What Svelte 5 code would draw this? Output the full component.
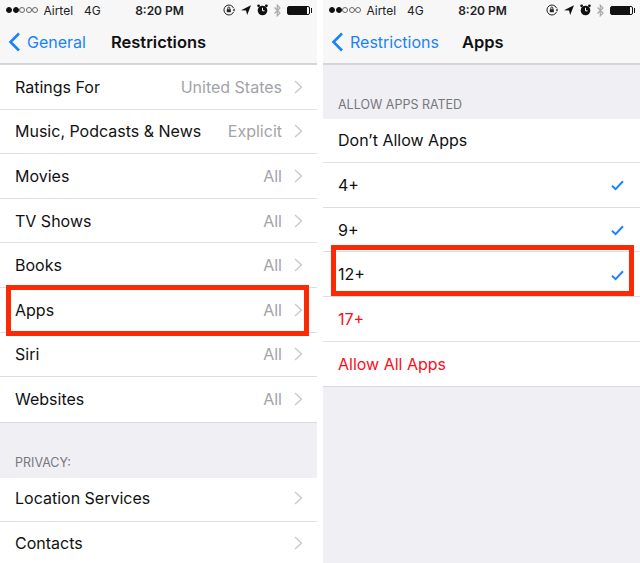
<script lang="ts">
  const restrictions = [
    { label: "Ratings For", value: "United States" },
    { label: "Music, Podcasts & News", value: "Explicit" },
    { label: "Movies", value: "All" },
    { label: "TV Shows", value: "All" },
    { label: "Books", value: "All" },
    { label: "Apps", value: "All" },
    { label: "Siri", value: "All" },
    { label: "Websites", value: "All" }
  ];
  const privacy = [{ label: "Location Services", value: "" }, { label: "Contacts", value: "" }];
  const ratings = [
    { label: "Don’t Allow Apps", check: false, red: false },
    { label: "4+", check: true, red: false },
    { label: "9+", check: true, red: false },
    { label: "12+", check: true, red: false },
    { label: "17+", check: false, red: true },
    { label: "Allow All Apps", check: false, red: true }
  ];
</script>

{#snippet status()}
  <div class="status">
    <div class="carrier">
      <span class="dots"><i class="on"></i><i class="on"></i><i></i><i></i><i></i></span>
      <span>Airtel</span>
      <span class="net">4G</span>
    </div>
    <div class="time">8:20 PM</div>
    <div class="icons">
      <svg width="12" height="12" viewBox="0 0 12 12"><path d="M10.6 4.2A5 5 0 1 0 10.6 7.8" fill="none" stroke="#222" stroke-width="1"/><path d="M9.6 6l2-1.4v2.8z" fill="#222"/><rect x="3.8" y="5.2" width="4" height="3" fill="#222"/><path d="M4.8 5.2V4a1 1 0 0 1 2 0v1.2" fill="none" stroke="#222" stroke-width=".9"/></svg>
      <svg width="10" height="10" viewBox="0 0 10 10"><path d="M0 5.2 10 .2 6.2 10 5 5.400z" fill="#111"/></svg>
      <svg width="11" height="12" viewBox="0 0 11 12"><circle cx="5.500" cy="6.500" r="4.800" fill="#111"/><circle cx="1.600" cy="1.800" r="1.400" fill="#111"/><circle cx="9.400" cy="1.800" r="1.400" fill="#111"/><path d="M5.500 3.800v3h2" fill="none" stroke="#fff" stroke-width="1"/></svg>
      <svg width="7" height="13" viewBox="0 0 7 13"><path d="M.5 3.500 6 9 3.300 11.800V1.200L6 4 .5 9.500" fill="none" stroke="#a9a9ac" stroke-width="1.200"/></svg>
      <span class="battery"><b></b></span>
    </div>
  </div>
{/snippet}

{#snippet nav(back, title, gap)}
  <header class="nav">
    {@render status()}
    <div class="bar">
      <svg class="back" width="13" height="20" viewBox="0 0 13 20"><path d="M11 1.500 2.500 10l8.500 8.500" fill="none" stroke="#1a82fb" stroke-width="2.600"/></svg>
      <span class="backlabel">{back}</span>
      <span class="title" style="margin-left: {gap}px">{title}</span>
    </div>
  </header>
{/snippet}

{#snippet row(item)}
  <div class="row">
    <div class="inner">
      <span class="label">{item.label}</span>
      {#if item.value}<span class="value">{item.value}</span>{/if}
      <svg class="chev" width="9" height="14" viewBox="0 0 9 14"><path d="M1 1l6.500 6L1 13" fill="none" stroke="#c7c7cc" stroke-width="1.300"/></svg>
    </div>
  </div>
{/snippet}

<main>
  <section class="panel">
    {@render nav("General", "Restrictions", 25)}
    <div class="group">
      {#each restrictions as item}
        {@render row(item)}
      {/each}
    </div>
    <div class="heading tall">PRIVACY:</div>
    <div class="group open">
      {#each privacy as item}
        {@render row(item)}
      {/each}
    </div>
    <div class="mark left"></div>
  </section>

  <section class="panel">
    {@render nav("Restrictions", "Apps", 23)}
    <div class="heading">ALLOW APPS RATED</div>
    <div class="group">
      {#each ratings as r}
        <div class="row">
          <div class="inner">
            <span class="label" class:red={r.red}>{r.label}</span>
            {#if r.check}
              <svg class="tick" width="13" height="11" viewBox="0 0 13 11"><path d="M1 5.800 4.600 9.200 12 1.200" fill="none" stroke="#1a82fb" stroke-width="2"/></svg>
            {/if}
          </div>
        </div>
      {/each}
    </div>
    <div class="mark right"></div>
  </section>
</main>

<style>
  :global(body) {
    background: #fff;
  }
  main {
    display: flex;
    justify-content: space-between;
    width: 640px;
    height: 563px;
    overflow: hidden;
    font-family: Inter, "Liberation Sans", sans-serif;
  }
  .panel {
    position: relative;
    width: 317px;
    height: 563px;
    overflow: hidden;
    background: #efeff4;
  }
  .nav {
    height: 63px;
    background: #f7f7f8;
    border-bottom: 2px solid #d6d6d9;
  }
  .status {
    display: flex;
    justify-content: space-between;
    align-items: center;
    height: 20px;
    padding: 0 4px 0 6px;
    font-size: 12px;
    color: #222;
  }
  .carrier {
    display: flex;
    align-items: center;
    width: 108px;
  }
  .dots {
    display: flex;
    gap: 0.6px;
    margin-right: 5px;
  }
  .dots i {
    width: 6px;
    height: 6px;
    box-sizing: border-box;
    border: 0.8px solid #666;
    border-radius: 50%;
  }
  .dots i.on {
    background: #111;
    border-color: #111;
  }
  .net {
    margin-left: 11px;
  }
  .time {
    font-size: 12px;
    font-weight: 600;
  }
  .icons {
    display: flex;
    align-items: center;
    justify-content: flex-end;
    gap: 6px;
    width: 108px;
  }
  .battery {
    position: relative;
    width: 23px;
    height: 9px;
    box-sizing: border-box;
    border: 1px solid #111;
    border-radius: 2px;
    margin-right: 3px;
  }
  .battery b {
    display: block;
    width: 19px;
    height: 7px;
    background: #111;
  }
  .battery::after {
    content: "";
    position: absolute;
    right: -3px;
    top: 1px;
    width: 1px;
    height: 5px;
    background: #111;
  }
  .bar {
    display: flex;
    align-items: center;
    height: 42px;
    padding: 1px 0 0 8px;
    box-sizing: border-box;
    font-size: 16px;
  }
  .back {
    margin-right: 6px;
  }
  .backlabel {
    color: #1a82fb;
  }
  .title {
    font-size: 16.500px;
    font-weight: 600;
    color: #111;
  }
  .heading {
    display: flex;
    align-items: flex-end;
    box-sizing: border-box;
    height: 53.600px;
    padding: 0 15px 7px;
    font-size: 12.500px;
    color: #77777c;
  }
  .heading.tall {
    height: 55px;
    padding-bottom: 8px;
  }
  .group {
    background: #fff;
    border-bottom: 1px solid #d9d9dc;
  }
  .group.open {
    border-bottom: 0;
    height: 90px;
  }
  .group.open .row {
    height: 44px;
  }
  .group.open .inner {
    padding-bottom: 2px;
    box-sizing: border-box;
  }
  .row {
    box-sizing: border-box;
    height: 44.600px;
    padding-left: 15px;
    border-bottom: 1px solid #dfdfe2;
  }
  .row:last-child {
    border-bottom: 0;
  }
  .inner {
    display: flex;
    align-items: center;
    height: 100%;
    padding-right: 14px;
    font-size: 16px;
    color: #111;
  }
  .label {
    flex: 1;
  }
  .label.red {
    color: #fb0d1b;
  }
  .value {
    color: #a3a3a8;
    margin-right: 12px;
  }
  .tick {
    margin: 2px 2px 0 0;
  }
  .mark {
    position: absolute;
    box-sizing: border-box;
    width: 303px;
    height: 51px;
    border: 5px solid #fb2a05;
  }
  .mark.left {
    left: 6px;
    top: 285px;
  }
  .mark.right {
    left: 8px;
    top: 245px;
  }
</style>
